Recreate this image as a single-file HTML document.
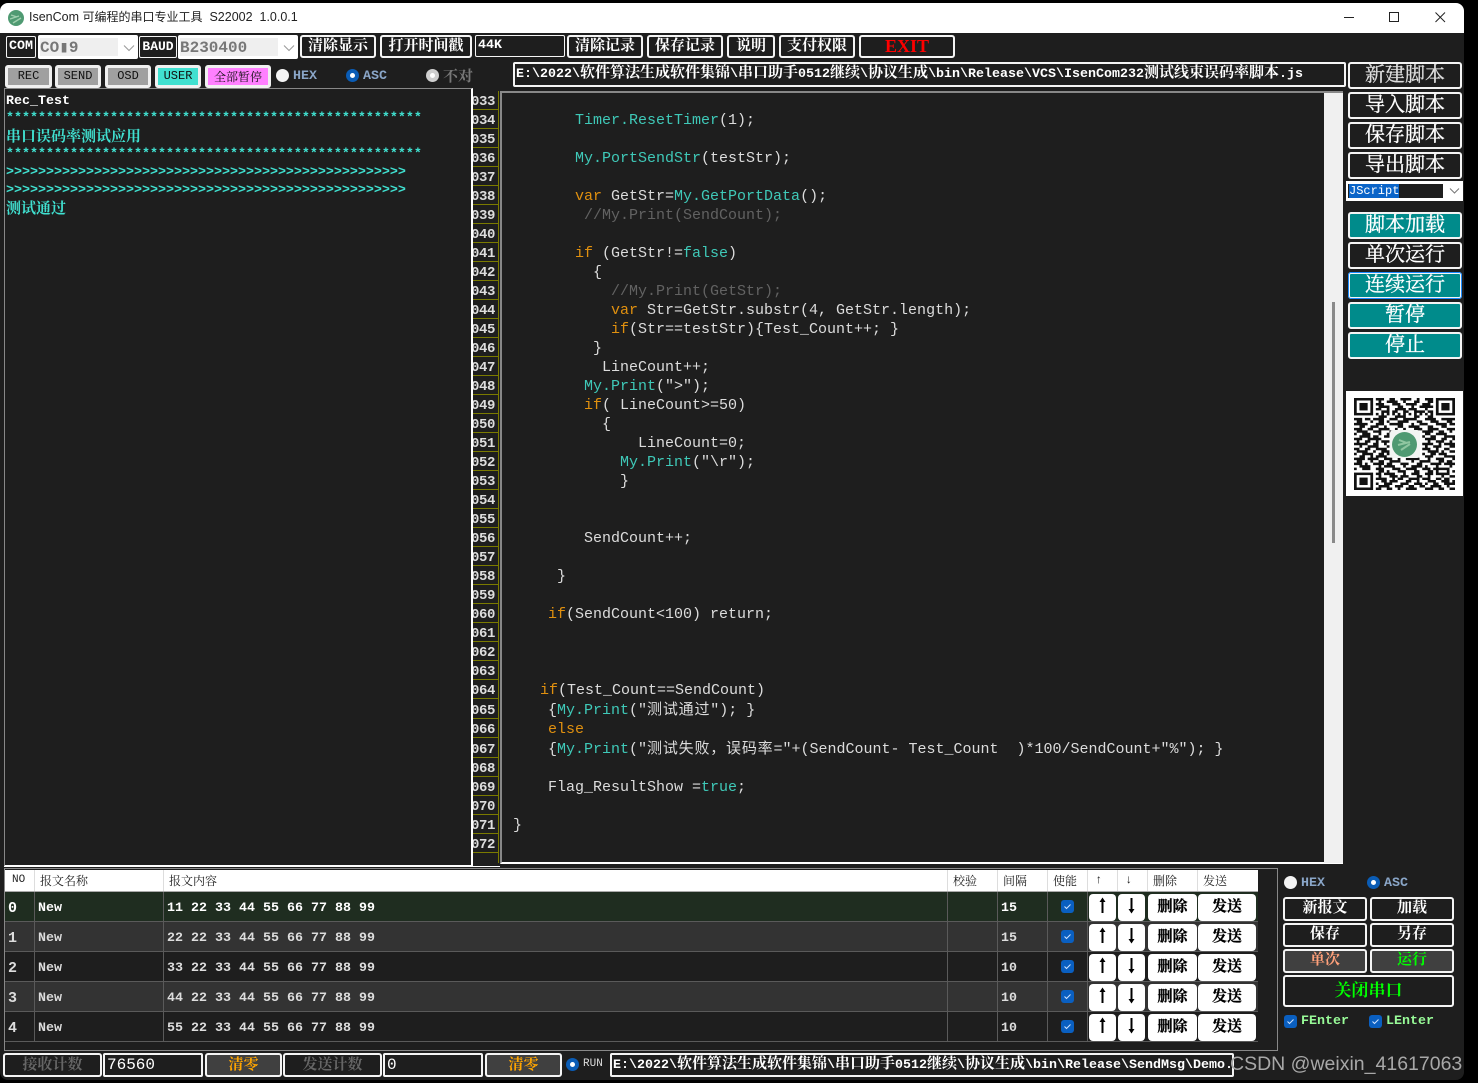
<!DOCTYPE html>
<html><head><meta charset="utf-8">
<style>
html,body{margin:0;padding:0;background:#000;}
#w{position:relative;width:1478px;height:1083px;overflow:hidden;background:#000;font-family:"Liberation Mono","Noto Serif CJK SC",monospace;}
#w div,#w span.a{box-sizing:border-box;}
.r{position:absolute;}
.t{position:absolute;white-space:pre;}
.b{position:absolute;border:2px solid #f4f4f4;border-radius:3px;background:#1e1e1e;color:#fff;text-align:center;font-family:"Noto Serif CJK SC",serif;white-space:pre;overflow:hidden;}
.top{font-size:15px;line-height:16px;font-weight:bold;}
.big{font-size:20px;line-height:18px;-webkit-text-stroke:.3px currentColor;}
.f{position:absolute;border:2px solid #f4f4f4;border-radius:2px;background:#1e1e1e;color:#fff;white-space:pre;overflow:hidden;font-weight:bold;}
.k{font-size:15px;}
.g{position:absolute;border:3px solid #f0f0f0;border-radius:3px;background:#a0a0a0;color:#111;text-align:center;font-size:12px;line-height:17px;font-family:"Liberation Mono","Noto Serif CJK SC",monospace;}
.c{position:absolute;white-space:pre;font-size:15px;line-height:19px;color:#dcdcdc;font-family:"Liberation Mono","Noto Sans CJK SC",monospace;}
.c i{font-style:normal;color:#3fc9b8;}
.c u{text-decoration:none;color:#e0900f;}
.c s{text-decoration:none;color:#626262;}
.c b{font-weight:normal;letter-spacing:.8px;}
.n{position:absolute;left:473px;width:26px;height:19px;border-bottom:1px solid #7b7b00;color:#ddd;font-size:14px;font-weight:bold;line-height:22px;letter-spacing:-.4px;white-space:pre;text-indent:-2px;overflow:hidden;}
.l{position:absolute;left:6px;white-space:pre;font-size:13.33px;line-height:18px;font-weight:bold;color:#40e0d0;font-family:"Liberation Mono","Noto Serif CJK SC",monospace;}
.h{position:absolute;top:870px;height:21px;background:#fff;border-right:1px solid #ddd;color:#222;font-size:12px;line-height:21px;padding-left:5px;font-family:"Noto Serif CJK SC",serif;white-space:pre;}
.row{position:absolute;left:5px;width:1253px;height:30px;border-bottom:1px solid #5a5a5a;}
.v{position:absolute;top:0;width:1px;height:30px;background:#5a5a5a;}
.x{position:absolute;white-space:pre;font-weight:bold;font-size:13.33px;line-height:29px;top:2px;color:#ddd;}
.w{position:absolute;top:2px;height:27px;background:#fff;border-radius:4px;color:#000;text-align:center;font-family:"Noto Serif CJK SC",serif;font-size:15px;font-weight:bold;line-height:24px;-webkit-text-stroke:.3px #000;}
.w svg{position:absolute;left:0;top:0;}
.ck{position:absolute;width:13px;height:13px;background:#0a5fc0;border-radius:3px;}
.ck svg{position:absolute;left:0;top:0;}
.ra{position:absolute;width:13px;height:13px;border-radius:50%;background:#f4f4f4;}
.rs{position:absolute;width:13px;height:13px;border-radius:50%;background:#0a5cb5;}
.rs:after{content:"";position:absolute;left:4px;top:4px;width:5px;height:5px;border-radius:50%;background:#fff;}
.lb{position:absolute;white-space:pre;font-size:13.33px;line-height:17px;font-weight:bold;color:#8aa6c8;}
</style></head>
<body><div id="w">
<!-- window -->
<div class="r" style="left:0;top:3px;width:1464px;height:1077px;background:#1e1e1e;border-radius:8px 8px 8px 8px;"></div>
<div class="r" style="left:0;top:3px;width:1464px;height:30px;background:#fff;border-radius:8px 8px 0 0;"></div>
<svg class="r" style="left:7px;top:9px" width="18" height="18"><circle cx="9" cy="9" r="8" fill="#4f9a72"/><path d="M4 6l6 2M3 10l9-3M6 14l8-5" stroke="#9fcfae" stroke-width="1.4" fill="none"/></svg>
<div class="t" style="left:29px;top:9px;font-family:'Liberation Sans','Noto Sans CJK SC',sans-serif;font-size:12.5px;line-height:17px;color:#222;">IsenCom <span style="font-size:12px">可编程的串口专业工具</span>  S22002  1.0.0.1</div>
<svg class="r" style="left:1340px;top:8px" width="120" height="18" fill="none" stroke="#222" stroke-width="1"><path d="M4 9.5h10"/><rect x="49.5" y="4.5" width="9" height="9"/><path d="M95.500 4.500l9.500 9.500M105 4.500l-9.500 9.500"/></svg>

<!-- row 1 -->
<div class="f" style="left:6px;top:36px;width:30px;height:22px;font-size:13.33px;line-height:20px;text-align:center;border-width:1px;">COM</div>
<div class="r" style="left:38px;top:35px;width:100px;height:24px;background:#fff;border-radius:2px;"></div>
<div class="t" style="left:40px;top:38px;width:78px;height:18px;background:#efefef;color:#777;font-size:16px;line-height:20px;font-weight:bold;overflow:hidden;">CO▮9</div>
<svg class="r" style="left:123px;top:44px" width="12" height="8"><path d="M1 1.500l5 5 5-5" fill="none" stroke="#999"/></svg>
<div class="f" style="left:139px;top:36px;width:38px;height:22px;font-size:13px;line-height:20px;text-align:center;border-width:1px;">BAUD</div>
<div class="r" style="left:178px;top:35px;width:120px;height:24px;background:#fff;border-radius:2px;"></div>
<div class="t" style="left:180px;top:38px;width:98px;height:18px;background:#efefef;color:#777;font-size:16px;line-height:20px;font-weight:bold;overflow:hidden;">B230400</div>
<svg class="r" style="left:283px;top:44px" width="12" height="8"><path d="M1 1.500l5 5 5-5" fill="none" stroke="#999"/></svg>
<div class="b top" style="left:300px;top:35px;width:76px;height:23px;">清除显示</div>
<div class="b top" style="left:380px;top:35px;width:92px;height:23px;">打开时间戳</div>
<div class="f" style="left:475px;top:35px;width:90px;height:22px;border-width:1px;font-size:13.33px;line-height:20px;padding-left:2px;">44K</div>
<div class="b top" style="left:567px;top:35px;width:76px;height:23px;">清除记录</div>
<div class="b top" style="left:647px;top:35px;width:76px;height:23px;">保存记录</div>
<div class="b top" style="left:727px;top:35px;width:48px;height:23px;">说明</div>
<div class="b top" style="left:779px;top:35px;width:76px;height:23px;">支付权限</div>
<div class="b" style="left:859px;top:35px;width:96px;height:23px;font-size:18px;line-height:19px;color:#f00;font-family:'Liberation Serif',serif;font-weight:bold;">EXIT</div>

<!-- row 2 -->
<div class="g" style="left:5px;top:65px;width:47px;height:23px;">REC</div>
<div class="g" style="left:55px;top:65px;width:46px;height:23px;">SEND</div>
<div class="g" style="left:105px;top:65px;width:46px;height:23px;">OSD</div>
<div class="g" style="left:155px;top:65px;width:46px;height:23px;background:#40e0d0;">USER</div>
<div class="g" style="left:205px;top:65px;width:66px;height:23px;background:#ff80ff;font-size:12px;font-family:'Noto Serif CJK SC',serif;">全部暂停</div>
<div class="ra" style="left:276px;top:69px;"></div>
<div class="lb" style="left:293px;top:68px;">HEX</div>
<div class="rs" style="left:346px;top:69px;"></div>
<div class="lb" style="left:363px;top:68px;">ASC</div>
<div class="ra" style="left:426px;top:69px;background:#cfcfcf;"></div>
<div class="r" style="left:430px;top:73px;width:5px;height:5px;border-radius:50%;background:#fff;"></div>
<div class="t" style="left:443px;top:66px;font-size:15px;line-height:19px;font-weight:bold;color:#777;font-family:'Noto Serif CJK SC',serif;">不对</div>
<div class="f" style="left:513px;top:62px;width:833px;height:25px;font-size:13.33px;line-height:19px;padding-left:1px;font-family:'Liberation Mono','Noto Serif CJK SC',monospace;">E:\2022\<span class="k">软件算法生成软件集锦</span>\<span class="k">串口助手</span>0512<span class="k">继续</span>\<span class="k">协议生成</span>\bin\Release\VCS\IsenCom232<span class="k">测试线束误码率脚本</span>.js</div>

<!-- log panel -->
<div class="r" style="left:4px;top:88px;width:469px;height:779px;border:1px solid #888;border-right:2px solid #fff;border-bottom:2px solid #fff;background:#1e1e1e;"></div>
<div class="r" style="left:0;top:6px;width:0;height:0;">
<div class="l" style="top:87px;color:#fff;">Rec_Test</div>
<div class="l" style="top:104px;">****************************************************</div>
<div class="l" style="top:123px;font-size:15px;">串口误码率测试应用</div>
<div class="l" style="top:140px;">****************************************************</div>
<div class="l" style="top:158px;">&gt;&gt;&gt;&gt;&gt;&gt;&gt;&gt;&gt;&gt;&gt;&gt;&gt;&gt;&gt;&gt;&gt;&gt;&gt;&gt;&gt;&gt;&gt;&gt;&gt;&gt;&gt;&gt;&gt;&gt;&gt;&gt;&gt;&gt;&gt;&gt;&gt;&gt;&gt;&gt;&gt;&gt;&gt;&gt;&gt;&gt;&gt;&gt;&gt;&gt;</div>
<div class="l" style="top:176px;">&gt;&gt;&gt;&gt;&gt;&gt;&gt;&gt;&gt;&gt;&gt;&gt;&gt;&gt;&gt;&gt;&gt;&gt;&gt;&gt;&gt;&gt;&gt;&gt;&gt;&gt;&gt;&gt;&gt;&gt;&gt;&gt;&gt;&gt;&gt;&gt;&gt;&gt;&gt;&gt;&gt;&gt;&gt;&gt;&gt;&gt;&gt;&gt;&gt;&gt;</div>
<div class="l" style="top:195px;font-size:15px;">测试通过</div>
</div>

<!-- line numbers -->
<div class="r" style="left:473px;top:91px;width:26px;height:772px;border-right:1px solid #7b7b00;"></div>
<div class="n" style="top:91px;">033</div>
<div class="n" style="top:110px;">034</div>
<div class="n" style="top:129px;">035</div>
<div class="n" style="top:148px;">036</div>
<div class="n" style="top:167px;">037</div>
<div class="n" style="top:186px;">038</div>
<div class="n" style="top:205px;">039</div>
<div class="n" style="top:224px;">040</div>
<div class="n" style="top:243px;">041</div>
<div class="n" style="top:262px;">042</div>
<div class="n" style="top:281px;">043</div>
<div class="n" style="top:300px;">044</div>
<div class="n" style="top:319px;">045</div>
<div class="n" style="top:338px;">046</div>
<div class="n" style="top:357px;">047</div>
<div class="n" style="top:376px;">048</div>
<div class="n" style="top:395px;">049</div>
<div class="n" style="top:414px;">050</div>
<div class="n" style="top:433px;">051</div>
<div class="n" style="top:452px;">052</div>
<div class="n" style="top:471px;">053</div>
<div class="n" style="top:490px;">054</div>
<div class="n" style="top:509px;">055</div>
<div class="n" style="top:528px;">056</div>
<div class="n" style="top:547px;">057</div>
<div class="n" style="top:566px;">058</div>
<div class="n" style="top:585px;">059</div>
<div class="n" style="top:604px;">060</div>
<div class="n" style="top:623px;">061</div>
<div class="n" style="top:642px;">062</div>
<div class="n" style="top:661px;">063</div>
<div class="n" style="top:680px;">064</div>
<div class="n" style="top:700px;">065</div>
<div class="n" style="top:719px;">066</div>
<div class="n" style="top:739px;">067</div>
<div class="n" style="top:758px;">068</div>
<div class="n" style="top:777px;">069</div>
<div class="n" style="top:796px;">070</div>
<div class="n" style="top:815px;">071</div>
<div class="n" style="top:834px;">072</div>

<!-- code -->
<div class="r" style="left:500px;top:91px;width:843px;height:773px;border-top:2px solid #888;border-left:2px solid #888;border-bottom:2px solid #fff;background:#1e1e1e;"></div>
<div class="r" style="left:1324px;top:93px;width:19px;height:770px;background:#f0f0f0;"></div>
<div class="r" style="left:1332px;top:302px;width:3px;height:241px;background:#8a8a8a;"></div>
<div class="r" style="left:0;top:2px;width:0;height:0;">
<div class="c" style="left:575px;top:109px;"><i>Timer.ResetTimer</i>(1);</div>
<div class="c" style="left:575px;top:147px;"><i>My.PortSendStr</i>(testStr);</div>
<div class="c" style="left:575px;top:185px;"><u>var</u> GetStr=<i>My.GetPortData</i>();</div>
<div class="c" style="left:584px;top:204px;"><s>//My.Print(SendCount);</s></div>
<div class="c" style="left:575px;top:242px;"><u>if</u> (GetStr!=<i>false</i>)</div>
<div class="c" style="left:593px;top:261px;">{</div>
<div class="c" style="left:611px;top:280px;"><s>//My.Print(GetStr);</s></div>
<div class="c" style="left:611px;top:299px;"><u>var</u> Str=GetStr.substr(4, GetStr.length);</div>
<div class="c" style="left:611px;top:318px;"><u>if</u>(Str==testStr){Test_Count++; }</div>
<div class="c" style="left:593px;top:337px;">}</div>
<div class="c" style="left:602px;top:356px;">LineCount++;</div>
<div class="c" style="left:584px;top:375px;"><i>My.Print</i>("&gt;");</div>
<div class="c" style="left:584px;top:394px;"><u>if</u>( LineCount&gt;=50)</div>
<div class="c" style="left:602px;top:413px;">{</div>
<div class="c" style="left:638px;top:432px;">LineCount=0;</div>
<div class="c" style="left:620px;top:451px;"><i>My.Print</i>("\r");</div>
<div class="c" style="left:620px;top:470px;">}</div>
<div class="c" style="left:584px;top:527px;">SendCount++;</div>
<div class="c" style="left:557px;top:565px;">}</div>
<div class="c" style="left:548px;top:603px;"><u>if</u>(SendCount&lt;100) return;</div>
<div class="c" style="left:540px;top:679px;"><u>if</u>(Test_Count==SendCount)</div>
<div class="c" style="left:548px;top:699px;">{<i>My.Print</i>("<b>测试通过</b>"); }</div>
<div class="c" style="left:548px;top:718px;"><u>else</u></div>
<div class="c" style="left:548px;top:738px;">{<i>My.Print</i>("<b>测试失败，误码率</b>="+(SendCount- Test_Count  )*100/SendCount+"%"); }</div>
<div class="c" style="left:548px;top:776px;">Flag_ResultShow =<i>true</i>;</div>
<div class="c" style="left:513px;top:814px;">}</div>
</div>

<!-- right buttons -->
<div class="b big" style="left:1348px;top:62px;width:114px;height:27px;color:#ddd;">新建脚本</div>
<div class="b big" style="left:1348px;top:92px;width:114px;height:27px;">导入脚本</div>
<div class="b big" style="left:1348px;top:122px;width:114px;height:27px;">保存脚本</div>
<div class="b big" style="left:1348px;top:152px;width:114px;height:27px;">导出脚本</div>
<div class="r" style="left:1346px;top:181px;width:117px;height:20px;background:#fff;"></div>
<div class="r" style="left:1348px;top:184px;width:95px;height:14px;background:#1e1e1e;"></div>
<div class="t" style="left:1349px;top:184px;height:14px;background:#0a64c8;color:#fff;font-size:12px;line-height:14px;">JScript</div>
<svg class="r" style="left:1449px;top:187px" width="11" height="8"><path d="M1 1.500l4.500 4.500 4.500-4.500" fill="none" stroke="#777"/></svg>
<div class="b big" style="left:1348px;top:212px;width:114px;height:27px;background:#008b8b;">脚本加载</div>
<div class="b big" style="left:1348px;top:242px;width:114px;height:27px;">单次运行</div>
<div class="b big" style="left:1348px;top:272px;width:114px;height:27px;background:#008b8b;outline:1px solid #1a8cff;outline-offset:-1px;">连续运行</div>
<div class="b big" style="left:1348px;top:302px;width:114px;height:27px;background:#008b8b;">暂停</div>
<div class="b big" style="left:1348px;top:332px;width:114px;height:27px;background:#008b8b;">停止</div>

<!-- QR -->
<div class="r" style="left:1346px;top:391px;width:117px;height:105px;background:#fff;"></div>
<svg class="r" style="left:1354px;top:398px" width="101" height="92" viewBox="0 0 37 37" preserveAspectRatio="none">
<g fill="none" stroke="#111" stroke-width="1">
<rect x=".5" y=".5" width="6" height="6"/><rect x="30.500" y=".5" width="6" height="6"/><rect x=".5" y="30.500" width="6" height="6"/>
<path d="M8 .5h3M13 .5h2M17 .5h4M23 .5h1M26 .5h3M9 1.500h1M12 1.500h4M18 1.500h1M22 1.500h2M27 1.500h2M8 2.500h3M14 2.500h3M19 2.500h4M25 2.500h3M9 3.500h4M16 3.500h2M21 3.500h1M24 3.500h5M8 4.500h2M12 4.500h1M15 4.500h4M20 4.500h3M26 4.500h1M10 5.500h3M14 5.500h2M18 5.500h2M22 5.500h4M27 5.500h2M8 6.500h1M10 6.500h1M12 6.500h1M14 6.500h1M16 6.500h1M18 6.500h1M20 6.500h1M22 6.500h1M24 6.500h1M26 6.500h1M28 6.500h1M9 7.500h3M15 7.500h4M22 7.500h2M27 7.500h2M0 8.500h3M4 8.500h2M7 8.500h4M13 8.500h3M18 8.500h5M26 8.500h4M32 8.500h5M1 9.500h2M6 9.500h1M9 9.500h2M12 9.500h1M16 9.500h4M23 9.500h2M28 9.500h3M34 9.500h2M0 10.500h5M8 10.500h3M13 10.500h5M21 10.500h1M24 10.500h3M30 10.500h4M35 10.500h2M2 11.500h2M6 11.500h3M11 11.500h1M16 11.500h2M20 11.500h4M27 11.500h2M32 11.500h2M0 12.500h3M5 12.500h2M9 12.500h4M15 12.500h1M18 12.500h1M22 12.500h3M27 12.500h4M34 12.500h3M1 13.500h4M7 13.500h3M13 13.500h2M25 13.500h4M31 13.500h2M35 13.500h1M0 14.500h1M3 14.500h3M9 14.500h1M12 14.500h1M26 14.500h2M30 14.500h4M2 15.500h4M7 15.500h2M11 15.500h2M25 15.500h1M28 15.500h2M33 15.500h4M0 16.500h3M5 16.500h5M26 16.500h4M32 16.500h2M36 16.500h1M1 17.500h1M4 17.500h2M8 17.500h1M10 17.500h3M27 17.500h1M30 17.500h3M35 17.500h1M0 18.500h5M7 18.500h2M11 18.500h1M25 18.500h4M31 18.500h1M33 18.500h4M2 19.500h1M5 19.500h4M12 19.500h1M26 19.500h1M29 19.500h3M35 19.500h2M0 20.500h2M4 20.500h2M8 20.500h4M25 20.500h3M30 20.500h1M33 20.500h2M1 21.500h4M7 21.500h1M10 21.500h3M27 21.500h4M32 21.500h1M35 21.500h2M0 22.500h1M3 22.500h4M9 22.500h2M12 22.500h1M25 22.500h1M28 22.500h2M31 22.500h3M2 23.500h2M6 23.500h1M8 23.500h4M14 23.500h3M20 23.500h3M26 23.500h3M33 23.500h4M0 24.500h4M5 24.500h4M11 24.500h3M16 24.500h1M19 24.500h5M27 24.500h1M30 24.500h3M36 24.500h1M1 25.500h2M6 25.500h1M9 25.500h2M13 25.500h4M21 25.500h1M24 25.500h4M31 25.500h2M34 25.500h2M0 26.500h3M4 26.500h1M7 26.500h4M12 26.500h2M17 26.500h3M23 26.500h2M28 26.500h4M33 26.500h4M2 27.500h4M9 27.500h1M11 27.500h4M18 27.500h1M21 27.500h4M26 27.500h1M30 27.500h1M35 27.500h1M0 28.500h1M3 28.500h3M8 28.500h3M14 28.500h3M19 28.500h4M25 28.500h3M29 28.500h6M9 29.500h2M12 29.500h1M16 29.500h3M22 29.500h2M27 29.500h2M30 29.500h1M34 29.500h1M36 29.500h1M8 30.500h2M11 30.500h4M18 30.500h1M21 30.500h3M26 30.500h3M30 30.500h5M9 31.500h1M13 31.500h3M17 31.500h3M23 31.500h2M27 31.500h1M32 31.500h1M35 31.500h2M8 32.500h4M14 32.500h1M16 32.500h2M20 32.500h4M25 32.500h3M30 32.500h2M33 32.500h2M10 33.500h2M13 33.500h3M19 33.500h2M23 33.500h1M27 33.500h3M32 33.500h3M36 33.500h1M8 34.500h1M11 34.500h3M17 34.500h3M22 34.500h3M26 34.500h1M29 34.500h2M33 34.500h4M9 35.500h4M15 35.500h3M20 35.500h2M24 35.500h2M28 35.500h4M34 35.500h1M8 36.500h2M12 36.500h2M16 36.500h1M19 36.500h4M26 36.500h3M31 36.500h2M35 36.500h2"/>
</g>
<g fill="#111"><rect x="2" y="2" width="3" height="3"/><rect x="32" y="2" width="3" height="3"/><rect x="2" y="32" width="3" height="3"/></g>
</svg>
<div class="r" style="left:1390px;top:430px;width:30px;height:28px;background:#f2f5f2;border-radius:3px;"></div>
<svg class="r" style="left:1391px;top:431px" width="27" height="27"><circle cx="13.500" cy="13.500" r="12.500" fill="#4f9a72"/><path d="M8 9l8 3M7 14l12-3M10 19l9-6" stroke="#8fc6a0" stroke-width="2" fill="none"/></svg>

<!-- table -->
<div class="r" style="left:4px;top:868px;width:1274px;height:183px;border:1px solid #888;background:#1e1e1e;"></div>
<div class="r" style="left:4px;top:866px;width:496px;height:1px;background:#fff;"></div>
<div class="h" style="left:5px;width:30px;font-size:11px;padding-left:7px;font-family:'Liberation Mono',monospace;">NO</div>
<div class="h" style="left:35px;width:129px;">报文名称</div>
<div class="h" style="left:164px;width:784px;">报文内容</div>
<div class="h" style="left:948px;width:50px;">校验</div>
<div class="h" style="left:998px;width:50px;">间隔</div>
<div class="h" style="left:1048px;width:40px;padding-left:5px;">使能</div>
<div class="h" style="left:1088px;width:30px;padding-left:7px;font-family:'Liberation Mono',monospace;">↑</div>
<div class="h" style="left:1118px;width:30px;padding-left:7px;font-family:'Liberation Mono',monospace;">↓</div>
<div class="h" style="left:1148px;width:50px;">删除</div>
<div class="h" style="left:1198px;width:60px;border-right:none;">发送</div>
<div class="r" style="left:5px;top:891px;width:1253px;height:1px;background:#aaa;"></div>

<!-- rows -->
<div class="row" style="top:892px;background:#1f2d20;">
<div class="v" style="left:29px"></div><div class="v" style="left:158px"></div><div class="v" style="left:942px"></div><div class="v" style="left:992px"></div><div class="v" style="left:1042px"></div><div class="v" style="left:1082px"></div>
<div class="x" style="left:3px;color:#fff;font-size:15px">0</div><div class="x" style="left:33px;color:#fff;">New</div><div class="x" style="left:162px;color:#fff">11 22 33 44 55 66 77 88 99</div><div class="x" style="left:996px;color:#fff;">15</div>
<div class="ck" style="left:1056px;top:8px;"><svg width="13" height="13"><path d="M3.500 6.500l2 2 4-4" fill="none" stroke="#cfe3ff"/></svg></div>
<div class="w" style="left:1084px;width:27px;"><svg width="27" height="27"><path d="M12.500 19V8h-2l3-4.500 3 4.500h-2v11z" fill="#000"/></svg></div><div class="w" style="left:1113px;width:27px;"><svg width="27" height="27"><path d="M12.500 4v11h-2l3 4.500 3-4.500h-2V4z" fill="#000"/></svg></div><div class="w" style="left:1143px;width:49px;">删除</div><div class="w" style="left:1193px;width:58px;">发送</div>
</div>
<div class="row" style="top:922px;background:#333;">
<div class="v" style="left:29px"></div><div class="v" style="left:158px"></div><div class="v" style="left:942px"></div><div class="v" style="left:992px"></div><div class="v" style="left:1042px"></div><div class="v" style="left:1082px"></div>
<div class="x" style="left:3px;font-size:15px">1</div><div class="x" style="left:33px;">New</div><div class="x" style="left:162px">22 22 33 44 55 66 77 88 99</div><div class="x" style="left:996px;">15</div>
<div class="ck" style="left:1056px;top:8px;"><svg width="13" height="13"><path d="M3.500 6.500l2 2 4-4" fill="none" stroke="#cfe3ff"/></svg></div>
<div class="w" style="left:1084px;width:27px;"><svg width="27" height="27"><path d="M12.500 19V8h-2l3-4.500 3 4.500h-2v11z" fill="#000"/></svg></div><div class="w" style="left:1113px;width:27px;"><svg width="27" height="27"><path d="M12.500 4v11h-2l3 4.500 3-4.500h-2V4z" fill="#000"/></svg></div><div class="w" style="left:1143px;width:49px;">删除</div><div class="w" style="left:1193px;width:58px;">发送</div>
</div>
<div class="row" style="top:952px;">
<div class="v" style="left:29px"></div><div class="v" style="left:158px"></div><div class="v" style="left:942px"></div><div class="v" style="left:992px"></div><div class="v" style="left:1042px"></div><div class="v" style="left:1082px"></div>
<div class="x" style="left:3px;font-size:15px">2</div><div class="x" style="left:33px;">New</div><div class="x" style="left:162px">33 22 33 44 55 66 77 88 99</div><div class="x" style="left:996px;">10</div>
<div class="ck" style="left:1056px;top:8px;"><svg width="13" height="13"><path d="M3.500 6.500l2 2 4-4" fill="none" stroke="#cfe3ff"/></svg></div>
<div class="w" style="left:1084px;width:27px;"><svg width="27" height="27"><path d="M12.500 19V8h-2l3-4.500 3 4.500h-2v11z" fill="#000"/></svg></div><div class="w" style="left:1113px;width:27px;"><svg width="27" height="27"><path d="M12.500 4v11h-2l3 4.500 3-4.500h-2V4z" fill="#000"/></svg></div><div class="w" style="left:1143px;width:49px;">删除</div><div class="w" style="left:1193px;width:58px;">发送</div>
</div>
<div class="row" style="top:982px;background:#333;">
<div class="v" style="left:29px"></div><div class="v" style="left:158px"></div><div class="v" style="left:942px"></div><div class="v" style="left:992px"></div><div class="v" style="left:1042px"></div><div class="v" style="left:1082px"></div>
<div class="x" style="left:3px;font-size:15px">3</div><div class="x" style="left:33px;">New</div><div class="x" style="left:162px">44 22 33 44 55 66 77 88 99</div><div class="x" style="left:996px;">10</div>
<div class="ck" style="left:1056px;top:8px;"><svg width="13" height="13"><path d="M3.500 6.500l2 2 4-4" fill="none" stroke="#cfe3ff"/></svg></div>
<div class="w" style="left:1084px;width:27px;"><svg width="27" height="27"><path d="M12.500 19V8h-2l3-4.500 3 4.500h-2v11z" fill="#000"/></svg></div><div class="w" style="left:1113px;width:27px;"><svg width="27" height="27"><path d="M12.500 4v11h-2l3 4.500 3-4.500h-2V4z" fill="#000"/></svg></div><div class="w" style="left:1143px;width:49px;">删除</div><div class="w" style="left:1193px;width:58px;">发送</div>
</div>
<div class="row" style="top:1012px;">
<div class="v" style="left:29px"></div><div class="v" style="left:158px"></div><div class="v" style="left:942px"></div><div class="v" style="left:992px"></div><div class="v" style="left:1042px"></div><div class="v" style="left:1082px"></div>
<div class="x" style="left:3px;font-size:15px">4</div><div class="x" style="left:33px;">New</div><div class="x" style="left:162px">55 22 33 44 55 66 77 88 99</div><div class="x" style="left:996px;">10</div>
<div class="ck" style="left:1056px;top:8px;"><svg width="13" height="13"><path d="M3.500 6.500l2 2 4-4" fill="none" stroke="#cfe3ff"/></svg></div>
<div class="w" style="left:1084px;width:27px;"><svg width="27" height="27"><path d="M12.500 19V8h-2l3-4.500 3 4.500h-2v11z" fill="#000"/></svg></div><div class="w" style="left:1113px;width:27px;"><svg width="27" height="27"><path d="M12.500 4v11h-2l3 4.500 3-4.500h-2V4z" fill="#000"/></svg></div><div class="w" style="left:1143px;width:49px;">删除</div><div class="w" style="left:1193px;width:58px;">发送</div>
</div>

<!-- bottom-right controls -->
<div class="ra" style="left:1284px;top:876px;"></div>
<div class="lb" style="left:1301px;top:875px;">HEX</div>
<div class="rs" style="left:1367px;top:876px;"></div>
<div class="lb" style="left:1384px;top:875px;">ASC</div>
<div class="b" style="left:1283px;top:897px;width:84px;height:24px;font-size:15px;line-height:15px;font-weight:bold;">新报文</div>
<div class="b" style="left:1370px;top:897px;width:84px;height:24px;font-size:15px;line-height:15px;font-weight:bold;">加载</div>
<div class="b" style="left:1283px;top:923px;width:84px;height:24px;font-size:15px;line-height:15px;font-weight:bold;">保存</div>
<div class="b" style="left:1370px;top:923px;width:84px;height:24px;font-size:15px;line-height:15px;font-weight:bold;">另存</div>
<div class="b" style="left:1283px;top:949px;width:84px;height:24px;font-size:15px;line-height:15px;font-weight:bold;background:#404040;color:#ffa07a;">单次</div>
<div class="b" style="left:1370px;top:949px;width:84px;height:24px;font-size:15px;line-height:15px;font-weight:bold;background:#404040;color:#0f0;">运行</div>
<div class="b" style="left:1283px;top:975px;width:171px;height:32px;font-size:17px;line-height:24px;color:#0f0;font-weight:bold;">关闭串口</div>
<div class="ck" style="left:1284px;top:1015px;"><svg width="13" height="13"><path d="M3.500 6.500l2 2 4-4" fill="none" stroke="#cfe3ff"/></svg></div>
<div class="t" style="left:1301px;top:1014px;font-size:13.33px;line-height:16px;font-weight:bold;color:#98fb98;">FEnter</div>
<div class="ck" style="left:1369px;top:1015px;"><svg width="13" height="13"><path d="M3.500 6.500l2 2 4-4" fill="none" stroke="#cfe3ff"/></svg></div>
<div class="t" style="left:1386px;top:1014px;font-size:13.33px;line-height:16px;font-weight:bold;color:#98fb98;">LEnter</div>

<!-- status bar -->
<div class="b" style="left:3px;top:1053px;width:99px;height:24px;font-size:15px;line-height:17px;color:#666;font-weight:bold;">接收计数</div>
<div class="f" style="left:103px;top:1053px;width:100px;height:24px;font-size:16px;line-height:20px;padding-left:2px;font-weight:normal;">76560</div>
<div class="b" style="left:205px;top:1053px;width:77px;height:24px;font-size:15px;line-height:18px;background:#404040;color:#ffa500;font-weight:bold;">清零</div>
<div class="b" style="left:283px;top:1053px;width:99px;height:24px;font-size:15px;line-height:17px;color:#666;font-weight:bold;">发送计数</div>
<div class="f" style="left:383px;top:1053px;width:100px;height:24px;font-size:16px;line-height:20px;padding-left:2px;font-weight:normal;">0</div>
<div class="b" style="left:485px;top:1053px;width:77px;height:24px;font-size:15px;line-height:18px;background:#404040;color:#ffa500;font-weight:bold;">清零</div>
<div class="rs" style="left:566px;top:1058px;"></div>
<div class="t" style="left:583px;top:1056px;font-size:11px;line-height:16px;color:#ddd;">RUN</div>
<div class="f" style="left:610px;top:1053px;width:624px;height:24px;font-size:13.33px;line-height:20px;padding-left:1px;font-family:'Liberation Mono','Noto Serif CJK SC',monospace;">E:\2022\<span class="k">软件算法生成软件集锦</span>\<span class="k">串口助手</span>0512<span class="k">继续</span>\<span class="k">协议生成</span>\bin\Release\SendMsg\Demo.txt</div>
<div class="t" style="left:1230px;top:1053px;font-family:'Liberation Sans',sans-serif;font-size:19.5px;line-height:23px;color:#a8a8a8;">CSDN @weixin_41617063</div>
</div></body></html>
